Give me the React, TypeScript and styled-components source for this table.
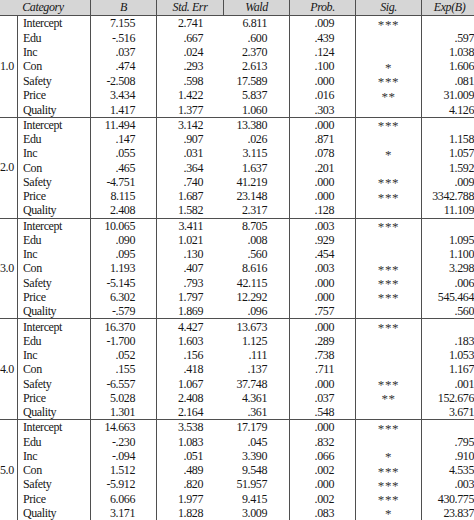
import React from "react";
import styled, { createGlobalStyle } from "styled-components";

type Row = [string, string, string, string, string, string, string];

interface Group {
  label: string;
  rows: Row[];
}

const groups: Group[] = [
  {
    label: "1.0",
    rows: [
      ["Intercept", "7.155", "2.741", "6.811", ".009", "***", ""],
      ["Edu", "-.516", ".667", ".600", ".439", "", ".597"],
      ["Inc", ".037", ".024", "2.370", ".124", "", "1.038"],
      ["Con", ".474", ".293", "2.613", ".100", "*", "1.606"],
      ["Safety", "-2.508", ".598", "17.589", ".000", "***", ".081"],
      ["Price", "3.434", "1.422", "5.837", ".016", "**", "31.009"],
      ["Quality", "1.417", "1.377", "1.060", ".303", "", "4.126"],
    ],
  },
  {
    label: "2.0",
    rows: [
      ["Intercept", "11.494", "3.142", "13.380", ".000", "***", ""],
      ["Edu", ".147", ".907", ".026", ".871", "", "1.158"],
      ["Inc", ".055", ".031", "3.115", ".078", "*", "1.057"],
      ["Con", ".465", ".364", "1.637", ".201", "", "1.592"],
      ["Safety", "-4.751", ".740", "41.219", ".000", "***", ".009"],
      ["Price", "8.115", "1.687", "23.148", ".000", "***", "3342.788"],
      ["Quality", "2.408", "1.582", "2.317", ".128", "", "11.109"],
    ],
  },
  {
    label: "3.0",
    rows: [
      ["Intercept", "10.065", "3.411", "8.705", ".003", "***", ""],
      ["Edu", ".090", "1.021", ".008", ".929", "", "1.095"],
      ["Inc", ".095", ".130", ".560", ".454", "", "1.100"],
      ["Con", "1.193", ".407", "8.616", ".003", "***", "3.298"],
      ["Safety", "-5.145", ".793", "42.115", ".000", "***", ".006"],
      ["Price", "6.302", "1.797", "12.292", ".000", "***", "545.464"],
      ["Quality", "-.579", "1.869", ".096", ".757", "", ".560"],
    ],
  },
  {
    label: "4.0",
    rows: [
      ["Intercept", "16.370", "4.427", "13.673", ".000", "***", ""],
      ["Edu", "-1.700", "1.603", "1.125", ".289", "", ".183"],
      ["Inc", ".052", ".156", ".111", ".738", "", "1.053"],
      ["Con", ".155", ".418", ".137", ".711", "", "1.167"],
      ["Safety", "-6.557", "1.067", "37.748", ".000", "***", ".001"],
      ["Price", "5.028", "2.408", "4.361", ".037", "**", "152.676"],
      ["Quality", "1.301", "2.164", ".361", ".548", "", "3.671"],
    ],
  },
  {
    label: "5.0",
    rows: [
      ["Intercept", "14.663", "3.538", "17.179", ".000", "***", ""],
      ["Edu", "-.230", "1.083", ".045", ".832", "", ".795"],
      ["Inc", "-.094", ".051", "3.390", ".066", "*", ".910"],
      ["Con", "1.512", ".489", "9.548", ".002", "***", "4.535"],
      ["Safety", "-5.912", ".820", "51.957", ".000", "***", ".003"],
      ["Price", "6.066", "1.977", "9.415", ".002", "***", "430.775"],
      ["Quality", "3.171", "1.828", "3.009", ".083", "*", "23.837"],
    ],
  },
];

const LINE = "#4f4f4f";

const GlobalStyle = createGlobalStyle`
  html, body {
    margin: 0;
    padding: 0;
    background: #ffffff;
  }
  body {
    width: 474px;
    height: 520px;
    overflow: hidden;
    font-family: "Liberation Serif", "Times New Roman", serif;
    color: #161616;
  }
  * {
    box-sizing: border-box;
  }
`;

const Table = styled.div`
  width: 477px;
  display: flex;
  flex-direction: column;
  font-size: 12px;
  letter-spacing: -0.4px;
`;

const HeaderRow = styled.div`
  display: grid;
  grid-template-columns: 90px 66px 67px 66px 66px 66px 56px;
  height: 16px;
  background: #d6d6d6;
  border-bottom: 1px solid ${LINE};
`;

const HeadCell = styled.div<{ $line?: boolean }>`
  display: flex;
  align-items: center;
  justify-content: center;
  font-style: italic;
  padding-right: ${(p) => (p.$line ? "0" : "4px")};
  border-left: ${(p) => (p.$line ? `1px solid ${LINE}` : "none")};
`;

const GroupBlock = styled.div<{ $first?: boolean }>`
  display: flex;
  height: 100.8px;
  border-top: ${(p) => (p.$first ? "none" : `1px solid ${LINE}`)};
`;

const GroupLabel = styled.div`
  width: 17px;
  flex: none;
  display: flex;
  align-items: center;
`;

const Rows = styled.div`
  flex: 1;
  display: flex;
  flex-direction: column;
  border-left: 1px solid ${LINE};
`;

const DataRow = styled.div`
  flex: 1;
  display: grid;
  grid-template-columns: 72px 66px 67px 66px 66px 66px 56px;
`;

const Cell = styled.div<{ $align: "left" | "right" | "center"; $line?: boolean; $pad?: number }>`
  display: flex;
  align-items: center;
  justify-content: ${(p) =>
    p.$align === "left" ? "flex-start" : p.$align === "right" ? "flex-end" : "center"};
  padding-left: ${(p) => (p.$align === "left" ? "5px" : "0")};
  padding-right: ${(p) => (p.$align === "right" ? `${p.$pad ?? 21}px` : "0")};
  border-left: ${(p) => (p.$line ? `1px solid ${LINE}` : "none")};
  white-space: nowrap;
  line-height: 1;
`;

const Stars = styled.span`
  font-size: 13px;
  letter-spacing: 0.6px;
  position: relative;
  top: 1px;
  color: #333;
`;

export default function App() {
  return (
    <>
      <GlobalStyle />
      <Table>
        <HeaderRow>
          <HeadCell>Category</HeadCell>
          <HeadCell $line>B</HeadCell>
          <HeadCell $line>Std. Err</HeadCell>
          <HeadCell $line>Wald</HeadCell>
          <HeadCell $line>Prob.</HeadCell>
          <HeadCell $line>Sig.</HeadCell>
          <HeadCell $line>Exp(B)</HeadCell>
        </HeaderRow>
        {groups.map((g, gi) => (
          <GroupBlock key={g.label} $first={gi === 0}>
            <GroupLabel>{g.label}</GroupLabel>
            <Rows>
              {g.rows.map((r) => (
                <DataRow key={r[0]}>
                  <Cell $align="left">{r[0]}</Cell>
                  <Cell $align="right" $line>{r[1]}</Cell>
                  <Cell $align="right" $line $pad={20}>{r[2]}</Cell>
                  <Cell $align="right" $pad={22}>{r[3]}</Cell>
                  <Cell $align="right" $line>{r[4]}</Cell>
                  <Cell $align="center" $line>
                    <Stars>{r[5]}</Stars>
                  </Cell>
                  <Cell $align="right" $line $pad={3}>{r[6]}</Cell>
                </DataRow>
              ))}
            </Rows>
          </GroupBlock>
        ))}
      </Table>
    </>
  );
}
